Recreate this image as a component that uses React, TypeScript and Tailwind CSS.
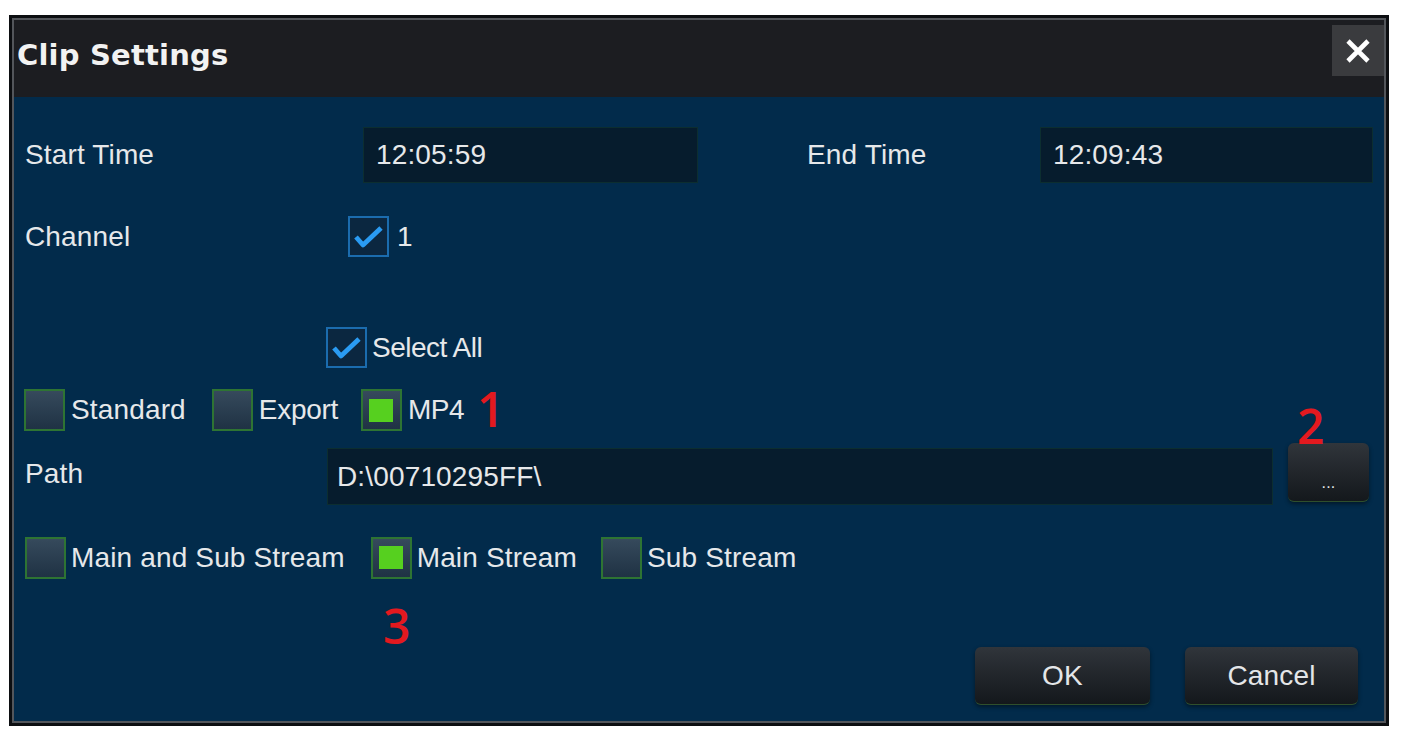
import React from "react";

const sans = { fontFamily: '"Liberation Sans", Arial, sans-serif' };

const BlueCheck = () => (
  <div className="w-[41px] h-[41px] border-2 border-[#1b6cae] bg-[#0b2740] shrink-0">
    <svg viewBox="0 0 37 37" className="w-full h-full">
      <polyline points="6,19 13,27 31,10" fill="none" stroke="#2a9bf2" strokeWidth="4.8" strokeLinejoin="round" />
    </svg>
  </div>
);

const GreenBox = ({ on }: { on?: boolean }) => (
  <div className="w-[41px] h-[42px] border-2 border-[#2e7433] bg-gradient-to-b from-[#364a5c] to-[#1f3244] flex items-center justify-center shrink-0">
    {on && <div className="w-[24px] h-[23px] bg-[#56d01f]" />}
  </div>
);

const DarkButton = ({ children, className }: { children: React.ReactNode; className: string }) => (
  <button
    className={`shrink-0 rounded-[6px] bg-gradient-to-b from-[#30353b] to-[#14181c] border-b border-[#2f4f2c] shadow-[0_2px_4px_rgba(0,0,0,0.45)] text-[#e4e6e8] ${className}`}
  >
    {children}
  </button>
);

const RedNote = ({ n, className }: { n: string; className: string }) => (
  <span
    className={`absolute text-[48px] leading-none font-semibold text-[#e3191f] ${className}`}
    style={{ fontFamily: '"Open Sans", sans-serif' }}
  >
    {n}
  </span>
);

export default function App() {
  return (
    <div className="min-h-screen bg-white pt-[15px] pl-[9px]" style={sans}>
      <div className="w-[1380px] h-[711px] border-[3px] border-[#0c0e11]">
        <div className="h-full border-2 border-[#53565b] flex flex-col">
          {/* Title bar */}
          <div className="h-[77px] bg-[#1c1d21] flex items-start justify-between shrink-0">
            <h1
              className="pt-[21px] pl-[3px] text-[29px] leading-none font-bold text-[#f2f2f2] tracking-[0.2px]"
              style={{ fontFamily: '"DejaVu Sans", sans-serif' }}
            >
              Clip Settings
            </h1>
            <button className="mt-[5px] w-[52px] h-[51px] bg-[#3a3b3e] flex items-center justify-center">
              <svg viewBox="0 0 26 24" className="w-[26px] h-[24px]">
                <path d="M3 2 L23 22 M23 2 L3 22" stroke="#ffffff" strokeWidth="4.6" />
              </svg>
            </button>
          </div>

          {/* Body */}
          <div className="relative flex-1 bg-[#022b4b] pl-[11px] pt-[30px] flex flex-col text-[28px] tracking-[0.15px] text-[#e6e8ea]">
            <div className="flex items-center h-[56px]">
              <span className="w-[338px] shrink-0">Start Time</span>
              <div className="w-[335px] shrink-0 h-full bg-[#061c2d] border border-[#0c2e30] flex items-center pl-[12px]">12:05:59</div>
              <span className="ml-[109px] w-[233px] shrink-0">End Time</span>
              <div className="w-[333px] shrink-0 h-full bg-[#061c2d] border border-[#0c2e30] flex items-center pl-[12px]">12:09:43</div>
            </div>

            <div className="flex items-center mt-[33px] h-[41px]">
              <span className="w-[323px] shrink-0">Channel</span>
              <BlueCheck />
              <span className="ml-[8px]">1</span>
            </div>

            <div className="flex items-center mt-[70px] h-[41px] pl-[301px]">
              <BlueCheck />
              <span className="ml-[5px] tracking-[-0.5px]">Select All</span>
            </div>

            <div className="flex items-center mt-[21px] h-[42px] -ml-[1px]">
              <GreenBox />
              <span className="ml-[6px]">Standard</span>
              <div className="ml-[26px]"><GreenBox /></div>
              <span className="ml-[6px] tracking-[-0.3px]">Export</span>
              <div className="ml-[23px]"><GreenBox on /></div>
              <span className="ml-[6px] tracking-[-0.5px]">MP4</span>
            </div>

            <div className="flex items-start mt-[12px] h-[62px]">
              <span className="w-[302px] shrink-0 self-center">Path</span>
              <div className="mt-[5px] w-[946px] shrink-0 h-[57px] bg-[#061c2d] border border-[#0c2e30] flex items-center pl-[9px]">
                D:\00710295FF\
              </div>
              <DarkButton className="ml-[15px] w-[81px] h-[59px] flex items-end justify-center pb-[10px] text-[16px] leading-none">
                ...
              </DarkButton>
            </div>

            <div className="flex items-center mt-[32px] h-[41px]">
              <GreenBox />
              <span className="ml-[5px]">Main and Sub Stream</span>
              <div className="ml-[26px]"><GreenBox on /></div>
              <span className="ml-[5px]">Main Stream</span>
              <div className="ml-[24px]"><GreenBox /></div>
              <span className="ml-[5px]">Sub Stream</span>
            </div>

            <div className="flex justify-end gap-[35px] mt-[69px] pr-[26px]">
              <DarkButton className="w-[175px] h-[58px]">OK</DarkButton>
              <DarkButton className="w-[173px] h-[58px]">Cancel</DarkButton>
            </div>

            <RedNote n="1" className="left-[463px] top-[288px]" />
            <RedNote n="2" className="left-[1283px] top-[305px]" />
            <RedNote n="3" className="left-[369px] top-[505px]" />
          </div>
        </div>
      </div>
    </div>
  );
}
